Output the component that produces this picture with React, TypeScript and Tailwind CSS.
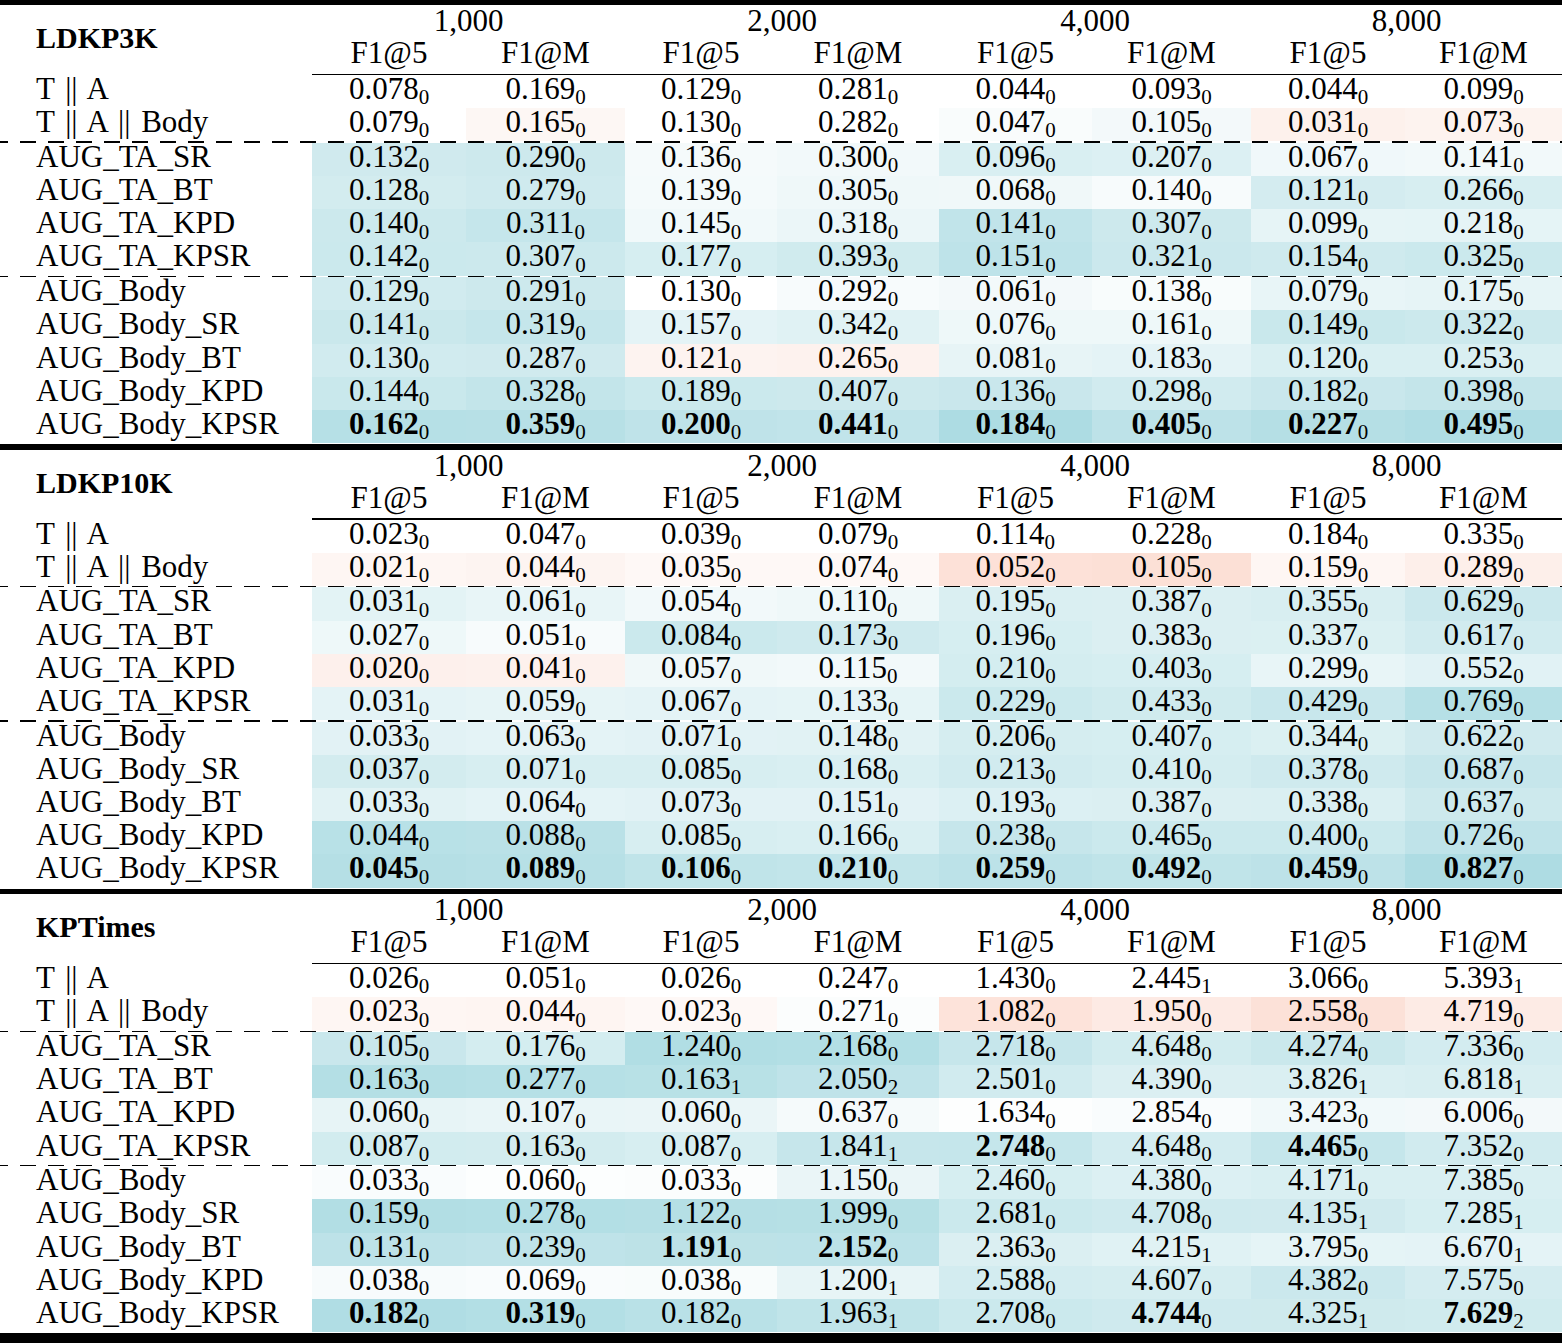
import React, { Fragment } from "react";

type Cell = [string, string, string];
type Row = [string, Cell[]];
type Section = { name: string; groups: Row[][] };

const COLS =
  "grid grid-cols-[312px_154px_159px_152px_162px_153px_159px_154px_157px]";

const S1: Section = {
  name: "LDKP3K",
  groups: [
    [
      ["T || A", [["0.078", "0", ""], ["0.169", "0", ""], ["0.129", "0", ""], ["0.281", "0", ""], ["0.044", "0", ""], ["0.093", "0", ""], ["0.044", "0", ""], ["0.099", "0", ""]]],
      ["T || A || Body", [["0.079", "0", ""], ["0.165", "0", "bg-[#fdf7f4]"], ["0.130", "0", ""], ["0.282", "0", ""], ["0.047", "0", "bg-[#f9fcfc]"], ["0.105", "0", "bg-[#f3f9fa]"], ["0.031", "0", "bg-[#fdf1ec]"], ["0.073", "0", "bg-[#fdf3ef]"]]],
    ],
    [
      ["AUG_TA_SR", [["0.132", "0", "bg-[#d0eaee]"], ["0.290", "0", "bg-[#cde9ed]"], ["0.136", "0", "bg-[#f5fafb]"], ["0.300", "0", "bg-[#f2f9fa]"], ["0.096", "0", "bg-[#d9eff2]"], ["0.207", "0", "bg-[#dcf0f3]"], ["0.067", "0", "bg-[#f0f8fa]"], ["0.141", "0", "bg-[#f2f9fa]"]]],
      ["AUG_TA_BT", [["0.128", "0", "bg-[#d3ecef]"], ["0.279", "0", "bg-[#cfeaee]"], ["0.139", "0", "bg-[#f4fafb]"], ["0.305", "0", "bg-[#eff8f9]"], ["0.068", "0", "bg-[#f0f8f9]"], ["0.140", "0", "bg-[#f7fbfc]"], ["0.121", "0", "bg-[#d4ecf0]"], ["0.266", "0", "bg-[#d7eef1]"]]],
      ["AUG_TA_KPD", [["0.140", "0", "bg-[#cce9ed]"], ["0.311", "0", "bg-[#c5e6eb]"], ["0.145", "0", "bg-[#f1f9fa]"], ["0.318", "0", "bg-[#ebf6f8]"], ["0.141", "0", "bg-[#c1e4ea]"], ["0.307", "0", "bg-[#cde9ed]"], ["0.099", "0", "bg-[#e6f4f6]"], ["0.218", "0", "bg-[#e5f4f6]"]]],
      ["AUG_TA_KPSR", [["0.142", "0", "bg-[#cbe9ed]"], ["0.307", "0", "bg-[#cce9ed]"], ["0.177", "0", "bg-[#d6eef1]"], ["0.393", "0", "bg-[#d0ebee]"], ["0.151", "0", "bg-[#bee3e9]"], ["0.321", "0", "bg-[#cbe8ed]"], ["0.154", "0", "bg-[#cfeaee]"], ["0.325", "0", "bg-[#cbe9ed]"]]],
    ],
    [
      ["AUG_Body", [["0.129", "0", "bg-[#d1ebef]"], ["0.291", "0", "bg-[#cde9ed]"], ["0.130", "0", ""], ["0.292", "0", "bg-[#f7fbfc]"], ["0.061", "0", "bg-[#f3f9fa]"], ["0.138", "0", "bg-[#f8fcfc]"], ["0.079", "0", "bg-[#e8f5f7]"], ["0.175", "0", "bg-[#e6f4f6]"]]],
      ["AUG_Body_SR", [["0.141", "0", "bg-[#cae8ec]"], ["0.319", "0", "bg-[#c5e6eb]"], ["0.157", "0", "bg-[#e4f3f6]"], ["0.342", "0", "bg-[#e0f2f4]"], ["0.076", "0", "bg-[#eef8f9]"], ["0.161", "0", "bg-[#eef8f9]"], ["0.149", "0", "bg-[#c9e8ec]"], ["0.322", "0", "bg-[#cce9ed]"]]],
      ["AUG_Body_BT", [["0.130", "0", "bg-[#d1ebef]"], ["0.287", "0", "bg-[#d0eaee]"], ["0.121", "0", "bg-[#fdf3f0]"], ["0.265", "0", "bg-[#fdf2ee]"], ["0.081", "0", "bg-[#e7f4f6]"], ["0.183", "0", "bg-[#e4f3f6]"], ["0.120", "0", "bg-[#d9eff2]"], ["0.253", "0", "bg-[#d9eff2]"]]],
      ["AUG_Body_KPD", [["0.144", "0", "bg-[#c9e8ec]"], ["0.328", "0", "bg-[#c3e5ea]"], ["0.189", "0", "bg-[#cbe9ed]"], ["0.407", "0", "bg-[#cde9ed]"], ["0.136", "0", "bg-[#c9e7ec]"], ["0.298", "0", "bg-[#d1ebef]"], ["0.182", "0", "bg-[#c9e7ec]"], ["0.398", "0", "bg-[#c4e5ea]"]]],
      ["AUG_Body_KPSR", [["0.162", "0", "bg-[#b6e0e6] font-bold"], ["0.359", "0", "bg-[#b7e0e6] font-bold"], ["0.200", "0", "bg-[#bfe3e9] font-bold"], ["0.441", "0", "bg-[#c1e4ea] font-bold"], ["0.184", "0", "bg-[#addce3] font-bold"], ["0.405", "0", "bg-[#bde2e8] font-bold"], ["0.227", "0", "bg-[#b5dfe5] font-bold"], ["0.495", "0", "bg-[#b0dde4] font-bold"]]],
    ],
  ],
};

const S2: Section = {
  name: "LDKP10K",
  groups: [
    [
      ["T || A", [["0.023", "0", ""], ["0.047", "0", ""], ["0.039", "0", ""], ["0.079", "0", ""], ["0.114", "0", ""], ["0.228", "0", ""], ["0.184", "0", ""], ["0.335", "0", ""]]],
      ["T || A || Body", [["0.021", "0", "bg-[#fef6f3]"], ["0.044", "0", "bg-[#fdf4f1]"], ["0.035", "0", "bg-[#fef8f6]"], ["0.074", "0", "bg-[#fef8f6]"], ["0.052", "0", "bg-[#fde1d8]"], ["0.105", "0", "bg-[#fce0d6]"], ["0.159", "0", "bg-[#fef6f3]"], ["0.289", "0", "bg-[#fdefea]"]]],
    ],
    [
      ["AUG_TA_SR", [["0.031", "0", "bg-[#e3f3f5]"], ["0.061", "0", "bg-[#e8f5f7]"], ["0.054", "0", "bg-[#f2f9fa]"], ["0.110", "0", "bg-[#eff8f9]"], ["0.195", "0", "bg-[#daeff2]"], ["0.387", "0", "bg-[#dbeff2]"], ["0.355", "0", "bg-[#d8eef1]"], ["0.629", "0", "bg-[#cbe8ed]"]]],
      ["AUG_TA_BT", [["0.027", "0", "bg-[#eef8f9]"], ["0.051", "0", "bg-[#f7fbfc]"], ["0.084", "0", "bg-[#cbe9ed]"], ["0.173", "0", "bg-[#cfeaee]"], ["0.196", "0", "bg-[#d6eef1]"], ["0.383", "0", "bg-[#dbeff2]"], ["0.337", "0", "bg-[#dbf0f2]"], ["0.617", "0", "bg-[#d1ebef]"]]],
      ["AUG_TA_KPD", [["0.020", "0", "bg-[#fdf0ec]"], ["0.041", "0", "bg-[#fdf1ed]"], ["0.057", "0", "bg-[#f0f8f9]"], ["0.115", "0", "bg-[#f2f9fa]"], ["0.210", "0", "bg-[#d4edf0]"], ["0.403", "0", "bg-[#d6eef1]"], ["0.299", "0", "bg-[#e8f5f7]"], ["0.552", "0", "bg-[#e1f2f5]"]]],
      ["AUG_TA_KPSR", [["0.031", "0", "bg-[#e4f3f6]"], ["0.059", "0", "bg-[#e6f4f6]"], ["0.067", "0", "bg-[#e4f3f6]"], ["0.133", "0", "bg-[#e5f4f6]"], ["0.229", "0", "bg-[#cbe9ed]"], ["0.433", "0", "bg-[#d0ebee]"], ["0.429", "0", "bg-[#c8e7ec]"], ["0.769", "0", "bg-[#b6e0e6]"]]],
    ],
    [
      ["AUG_Body", [["0.033", "0", "bg-[#e2f2f5]"], ["0.063", "0", "bg-[#e4f3f6]"], ["0.071", "0", "bg-[#e2f2f5]"], ["0.148", "0", "bg-[#e1f2f4]"], ["0.206", "0", "bg-[#d5edf0]"], ["0.407", "0", "bg-[#d6eef1]"], ["0.344", "0", "bg-[#dbf0f2]"], ["0.622", "0", "bg-[#d0eaee]"]]],
      ["AUG_Body_SR", [["0.037", "0", "bg-[#d3ecef]"], ["0.071", "0", "bg-[#d7eef1]"], ["0.085", "0", "bg-[#d7eef1]"], ["0.168", "0", "bg-[#d9eff2]"], ["0.213", "0", "bg-[#d1ebef]"], ["0.410", "0", "bg-[#d4edf0]"], ["0.378", "0", "bg-[#cfeaee]"], ["0.687", "0", "bg-[#c6e6eb]"]]],
      ["AUG_Body_BT", [["0.033", "0", "bg-[#e1f2f4]"], ["0.064", "0", "bg-[#e4f3f6]"], ["0.073", "0", "bg-[#e2f2f5]"], ["0.151", "0", "bg-[#e2f2f5]"], ["0.193", "0", "bg-[#dcf0f3]"], ["0.387", "0", "bg-[#dbeff2]"], ["0.338", "0", "bg-[#daeff2]"], ["0.637", "0", "bg-[#cde9ed]"]]],
      ["AUG_Body_KPD", [["0.044", "0", "bg-[#b8e1e7]"], ["0.088", "0", "bg-[#bae1e7]"], ["0.085", "0", "bg-[#d7eef1]"], ["0.166", "0", "bg-[#d9eff2]"], ["0.238", "0", "bg-[#c6e6eb]"], ["0.465", "0", "bg-[#cbe9ed]"], ["0.400", "0", "bg-[#cbe9ed]"], ["0.726", "0", "bg-[#bfe3e9]"]]],
      ["AUG_Body_KPSR", [["0.045", "0", "bg-[#b5dfe5] font-bold"], ["0.089", "0", "bg-[#b7e0e6] font-bold"], ["0.106", "0", "bg-[#c0e4e9] font-bold"], ["0.210", "0", "bg-[#c2e5ea] font-bold"], ["0.259", "0", "bg-[#bce2e8] font-bold"], ["0.492", "0", "bg-[#c0e4e9] font-bold"], ["0.459", "0", "bg-[#bde2e8] font-bold"], ["0.827", "0", "bg-[#aedce3] font-bold"]]],
    ],
  ],
};

const S3: Section = {
  name: "KPTimes",
  groups: [
    [
      ["T || A", [["0.026", "0", ""], ["0.051", "0", ""], ["0.026", "0", ""], ["0.247", "0", ""], ["1.430", "0", ""], ["2.445", "1", ""], ["3.066", "0", ""], ["5.393", "1", ""]]],
      ["T || A || Body", [["0.023", "0", "bg-[#fef6f3]"], ["0.044", "0", "bg-[#fef5f2]"], ["0.023", "0", "bg-[#fef8f6]"], ["0.271", "0", "bg-[#fbfdfd]"], ["1.082", "0", "bg-[#fde3da]"], ["1.950", "0", "bg-[#fdeae4]"], ["2.558", "0", "bg-[#fce1d8]"], ["4.719", "0", "bg-[#fdebe5]"]]],
    ],
    [
      ["AUG_TA_SR", [["0.105", "0", "bg-[#c9e7ec]"], ["0.176", "0", "bg-[#d4edf0]"], ["1.240", "0", "bg-[#b1dee4]"], ["2.168", "0", "bg-[#b3dfe5]"], ["2.718", "0", "bg-[#c6e6eb]"], ["4.648", "0", "bg-[#d2ecef]"], ["4.274", "0", "bg-[#cae8ec]"], ["7.336", "0", "bg-[#d3ecf0]"]]],
      ["AUG_TA_BT", [["0.163", "0", "bg-[#b4dfe5]"], ["0.277", "0", "bg-[#b6e0e6]"], ["0.163", "1", "bg-[#b8e1e6]"], ["2.050", "2", "bg-[#bfe3e9]"], ["2.501", "0", "bg-[#d1ebef]"], ["4.390", "0", "bg-[#dbeff2]"], ["3.826", "1", "bg-[#daeff2]"], ["6.818", "1", "bg-[#d8eef1]"]]],
      ["AUG_TA_KPD", [["0.060", "0", "bg-[#e7f4f6]"], ["0.107", "0", "bg-[#e9f5f7]"], ["0.060", "0", "bg-[#eaf5f7]"], ["0.637", "0", "bg-[#f5fafb]"], ["1.634", "0", "bg-[#fdfefe]"], ["2.854", "0", "bg-[#f9fcfd]"], ["3.423", "0", "bg-[#f1f9fa]"], ["6.006", "0", "bg-[#f3f9fa]"]]],
      ["AUG_TA_KPSR", [["0.087", "0", "bg-[#d2ecef]"], ["0.163", "0", "bg-[#d3ecef]"], ["0.087", "0", "bg-[#d7eef1]"], ["1.841", "1", "bg-[#c6e6eb]"], ["2.748", "0", "bg-[#c5e6eb] font-bold"], ["4.648", "0", "bg-[#d3ecf0]"], ["4.465", "0", "bg-[#c5e6eb] font-bold"], ["7.352", "0", "bg-[#d1ebef]"]]],
    ],
    [
      ["AUG_Body", [["0.033", "0", "bg-[#f9fcfd]"], ["0.060", "0", "bg-[#fcfefe]"], ["0.033", "0", "bg-[#fbfdfd]"], ["1.150", "0", "bg-[#eaf5f7]"], ["2.460", "0", "bg-[#d6eef1]"], ["4.380", "0", "bg-[#dcf0f3]"], ["4.171", "0", "bg-[#d9eff2]"], ["7.385", "0", "bg-[#d9eff2]"]]],
      ["AUG_Body_SR", [["0.159", "0", "bg-[#b2dee4]"], ["0.278", "0", "bg-[#b3dfe5]"], ["1.122", "0", "bg-[#b5dfe5]"], ["1.999", "0", "bg-[#b6e0e5]"], ["2.681", "0", "bg-[#cbe9ed]"], ["4.708", "0", "bg-[#cfeaee]"], ["4.135", "1", "bg-[#d0eaee]"], ["7.285", "1", "bg-[#d6eef1]"]]],
      ["AUG_Body_BT", [["0.131", "0", "bg-[#bde2e8]"], ["0.239", "0", "bg-[#bfe3e9]"], ["1.191", "0", "bg-[#bde2e7] font-bold"], ["2.152", "0", "bg-[#bce2e8] font-bold"], ["2.363", "0", "bg-[#dbeff2]"], ["4.215", "1", "bg-[#e0f2f4]"], ["3.795", "0", "bg-[#e5f4f6]"], ["6.670", "1", "bg-[#e4f3f6]"]]],
      ["AUG_Body_KPD", [["0.038", "0", "bg-[#f7fbfc]"], ["0.069", "0", "bg-[#f9fcfd]"], ["0.038", "0", "bg-[#f8fcfc]"], ["1.200", "1", "bg-[#e7f4f6]"], ["2.588", "0", "bg-[#d3ecf0]"], ["4.607", "0", "bg-[#d5edf0]"], ["4.382", "0", "bg-[#cbe8ed]"], ["7.575", "0", "bg-[#d4ecf0]"]]],
      ["AUG_Body_KPSR", [["0.182", "0", "bg-[#b0dde4] font-bold"], ["0.319", "0", "bg-[#b3dfe5] font-bold"], ["0.182", "0", "bg-[#b9e1e7]"], ["1.963", "1", "bg-[#c0e4e9]"], ["2.708", "0", "bg-[#cbe9ed]"], ["4.744", "0", "bg-[#cfeaee] font-bold"], ["4.325", "1", "bg-[#cfeaed]"], ["7.629", "2", "bg-[#d0ebee] font-bold"]]],
    ],
  ],
};

const SECTIONS = [S1, S2, S3];

function Header({ name }: { name: string }) {
  return (
    <div className="flex h-[70px] flex-col">
      <div className={`${COLS} grid-rows-[32px_32px] text-[31px] leading-[32px]`}>
        <div className="row-span-2 whitespace-nowrap pl-[36px] pt-[18px] text-[30px] font-bold leading-[30px]">
          {name}
        </div>
        {["1,000", "2,000", "4,000", "8,000"].map((n) => (
          <div key={n} className="col-span-2 text-center">
            {n}
          </div>
        ))}
        {[0, 1, 2, 3].map((i) => (
          <Fragment key={i}>
            <div className="text-center">F1@5</div>
            <div className="text-center">F1@M</div>
          </Fragment>
        ))}
      </div>
      <div className="ml-[312px] mt-auto h-[1.5px] bg-black" />
    </div>
  );
}

function DataRow({ row }: { row: Row }) {
  const [label, cells] = row;
  return (
    <div className={`${COLS} h-[33.2px] text-[31px] leading-[27px]`}>
      <div className="whitespace-pre pl-[36px] [word-spacing:3px]">{label}</div>
      {cells.map((c, i) => (
        <div key={i} className={`whitespace-nowrap text-center ${c[2]}`}>
          <span>{c[0]}</span>
          <sub className="text-[21px] font-normal">{c[1]}</sub>
        </div>
      ))}
    </div>
  );
}

function Dash() {
  return (
    <div className="h-[1.5px] w-[1562px] bg-[image:repeating-linear-gradient(90deg,#000_0_8px,transparent_8px_20px,#000_20px_28px)]" />
  );
}

export default function App() {
  return (
    <div className="w-[1564px] bg-white font-['Liberation_Serif','Times_New_Roman',serif] text-black">
      <div className="w-[1562px]">
        <div className="h-[5px] bg-black" />
        {SECTIONS.map((s, si) => (
          <Fragment key={s.name}>
            <div>
              <Header name={s.name} />
              {s.groups.map((g, gi) => (
                <Fragment key={gi}>
                  {gi > 0 && <Dash />}
                  {g.map((r, ri) => (
                    <DataRow key={ri} row={r} />
                  ))}
                </Fragment>
              ))}
            </div>
            <div className={si < 2 ? "mt-[1px] h-[5.5px] bg-black" : "mt-[1px] h-[10px] bg-black"} />
          </Fragment>
        ))}
      </div>
    </div>
  );
}
